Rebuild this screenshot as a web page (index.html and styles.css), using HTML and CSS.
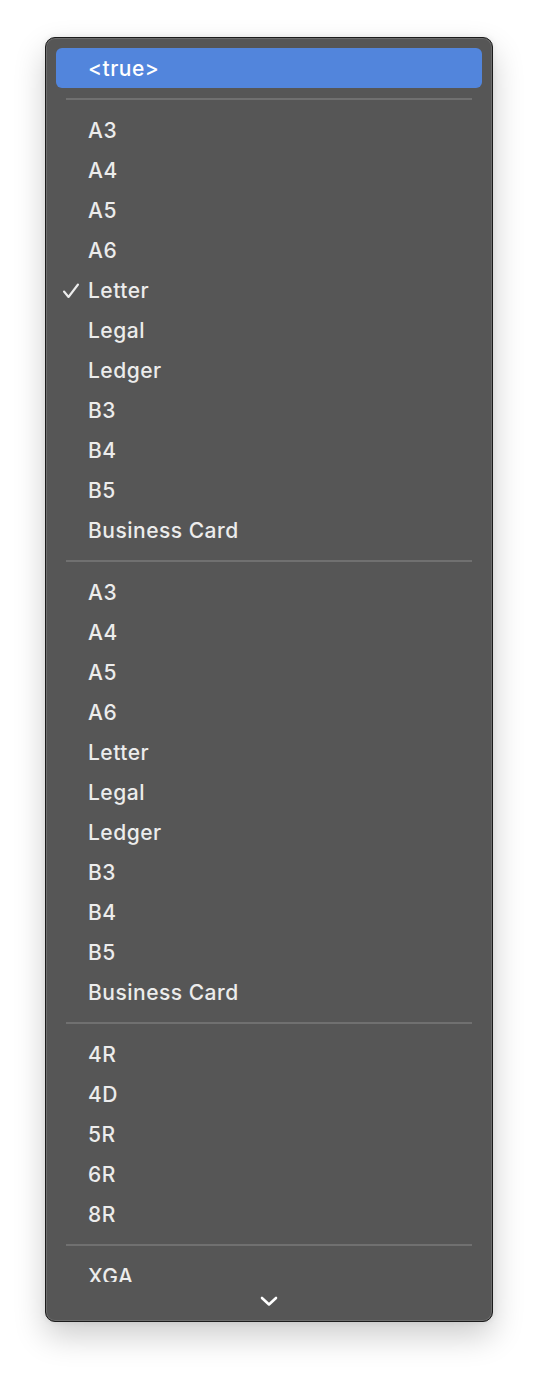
FILE: index.html
```html
<!DOCTYPE html>
<html>
<head>
<meta charset="utf-8">
<link rel="stylesheet" href="styles.css">
</head>
<body>
<div class="menu">
  <div class="list">
    <div class="item selected"><span class="check"></span><span class="label">&lt;true&gt;</span></div>
    <div class="sep"></div>
    <div class="item"><span class="check"></span><span class="label">A3</span></div>
    <div class="item"><span class="check"></span><span class="label">A4</span></div>
    <div class="item"><span class="check"></span><span class="label">A5</span></div>
    <div class="item"><span class="check"></span><span class="label">A6</span></div>
    <div class="item"><span class="check"><svg width="18" height="16" viewBox="0 0 18 16"><polyline points="2,8.5 6.5,14 16,1.5" fill="none" stroke="#ececec" stroke-width="2.1" stroke-linecap="round" stroke-linejoin="round"/></svg></span><span class="label">Letter</span></div>
    <div class="item"><span class="check"></span><span class="label">Legal</span></div>
    <div class="item"><span class="check"></span><span class="label">Ledger</span></div>
    <div class="item"><span class="check"></span><span class="label">B3</span></div>
    <div class="item"><span class="check"></span><span class="label">B4</span></div>
    <div class="item"><span class="check"></span><span class="label">B5</span></div>
    <div class="item"><span class="check"></span><span class="label">Business Card</span></div>
    <div class="sep"></div>
    <div class="item"><span class="check"></span><span class="label">A3</span></div>
    <div class="item"><span class="check"></span><span class="label">A4</span></div>
    <div class="item"><span class="check"></span><span class="label">A5</span></div>
    <div class="item"><span class="check"></span><span class="label">A6</span></div>
    <div class="item"><span class="check"></span><span class="label">Letter</span></div>
    <div class="item"><span class="check"></span><span class="label">Legal</span></div>
    <div class="item"><span class="check"></span><span class="label">Ledger</span></div>
    <div class="item"><span class="check"></span><span class="label">B3</span></div>
    <div class="item"><span class="check"></span><span class="label">B4</span></div>
    <div class="item"><span class="check"></span><span class="label">B5</span></div>
    <div class="item"><span class="check"></span><span class="label">Business Card</span></div>
    <div class="sep"></div>
    <div class="item"><span class="check"></span><span class="label">4R</span></div>
    <div class="item"><span class="check"></span><span class="label">4D</span></div>
    <div class="item"><span class="check"></span><span class="label">5R</span></div>
    <div class="item"><span class="check"></span><span class="label">6R</span></div>
    <div class="item"><span class="check"></span><span class="label">8R</span></div>
    <div class="sep"></div>
    <div class="item"><span class="check"></span><span class="label">XGA</span></div>
  </div>
  <div class="scroll-arrow">
    <svg width="20" height="12" viewBox="0 0 20 12"><polyline points="3,3 10,9.5 17,3" fill="none" stroke="#ffffff" stroke-width="2.6" stroke-linecap="round" stroke-linejoin="round"/></svg>
  </div>
</div>
</body>
</html>
```

FILE: styles.css
```css
html, body {
  margin: 0;
  padding: 0;
  background: #ffffff;
}
body {
  min-height: 1376px;
  box-sizing: border-box;
  padding: 37px 0 0 45px;
  font-family: Inter, "Helvetica Neue", Arial, sans-serif;
}
.menu {
  box-sizing: border-box;
  width: 448px;
  height: 1285px;
  background: #565656;
  border: 1px solid #1c1c1c;
  border-radius: 10px;
  box-shadow: inset 0 0 0 1px #6c6c6c, 0 14px 32px rgba(0, 0, 0, 0.2), 0 0 6px rgba(0, 0, 0, 0.08);
  padding: 10px 10px 0 10px;
  display: flex;
  flex-direction: column;
}
.list {
  height: 1234px;
  overflow: hidden;
  flex: none;
}
.item {
  height: 40px;
  display: flex;
  align-items: center;
  color: #ececec;
  font-size: 21px;
  font-weight: 450;
  letter-spacing: 0.5px;
  border-radius: 6px;
}
.item.selected {
  background: #5285dc;
  color: #ffffff;
}
.check {
  width: 32px;
  height: 40px;
  flex: none;
  display: flex;
  align-items: center;
  padding-left: 6px;
  box-sizing: border-box;
}
.check svg {
  display: block;
  margin-top: 1px;
}
.label {
  white-space: nowrap;
}
.sep {
  height: 22px;
  display: flex;
  align-items: center;
  padding: 0 10px;
}
.sep::before {
  content: "";
  display: block;
  flex: 1;
  height: 2px;
  background: #707070;
}
.scroll-arrow {
  height: 39px;
  display: flex;
  justify-content: center;
  align-items: flex-start;
  padding-top: 13px;
  box-sizing: border-box;
}
.scroll-arrow svg {
  display: block;
}
```
